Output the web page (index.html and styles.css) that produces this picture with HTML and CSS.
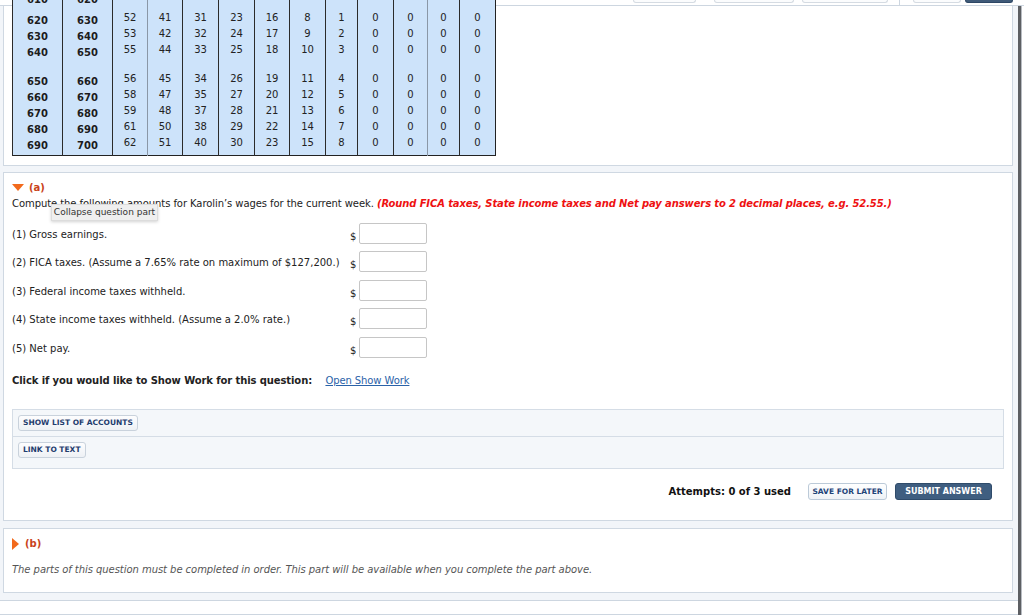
FILE: index.html
```html
<!DOCTYPE html>
<html>
<head>
<meta charset="utf-8">
<link rel="stylesheet" href="styles.css">
</head>
<body>
<div class="topbar">
  <span class="tb-btn w63"></span>
  <span class="tb-btn w80"></span>
  <span class="tb-btn w86"></span>
  <span class="tb-sep"></span>
  <span class="tb-btn w48"></span>
  <span class="tb-btn tb-dark w48"></span>
</div>
<div class="frame">
  <div class="content">
    <div class="panel panel-table">
      <table class="wage-table">
        <colgroup>
          <col style="width:50px"><col style="width:50px"><col style="width:35px"><col style="width:35px"><col style="width:36px"><col style="width:36px"><col style="width:35px"><col style="width:36px"><col style="width:32px"><col style="width:36px"><col style="width:34px"><col style="width:32px"><col style="width:36px">
        </colgroup>
        <tr class="r-first"><td class="b">610</td><td class="b">620</td><td></td><td class="g"></td><td></td><td></td><td></td><td></td><td></td><td></td><td></td><td class="g"></td><td></td></tr>
        <tr><td class="b">620</td><td class="b">630</td><td>52</td><td class="g">41</td><td>31</td><td>23</td><td>16</td><td>8</td><td>1</td><td>0</td><td>0</td><td class="g">0</td><td>0</td></tr>
        <tr><td class="b">630</td><td class="b">640</td><td>53</td><td class="g">42</td><td>32</td><td>24</td><td>17</td><td>9</td><td>2</td><td>0</td><td>0</td><td class="g">0</td><td>0</td></tr>
        <tr><td class="b">640</td><td class="b">650</td><td>55</td><td class="g">44</td><td>33</td><td>25</td><td>18</td><td>10</td><td>3</td><td>0</td><td>0</td><td class="g">0</td><td>0</td></tr>
        <tr class="r-blank"><td></td><td></td><td></td><td class="g"></td><td></td><td></td><td></td><td></td><td></td><td></td><td></td><td class="g"></td><td></td></tr>
        <tr><td class="b">650</td><td class="b">660</td><td>56</td><td class="g">45</td><td>34</td><td>26</td><td>19</td><td>11</td><td>4</td><td>0</td><td>0</td><td class="g">0</td><td>0</td></tr>
        <tr><td class="b">660</td><td class="b">670</td><td>58</td><td class="g">47</td><td>35</td><td>27</td><td>20</td><td>12</td><td>5</td><td>0</td><td>0</td><td class="g">0</td><td>0</td></tr>
        <tr><td class="b">670</td><td class="b">680</td><td>59</td><td class="g">48</td><td>37</td><td>28</td><td>21</td><td>13</td><td>6</td><td>0</td><td>0</td><td class="g">0</td><td>0</td></tr>
        <tr><td class="b">680</td><td class="b">690</td><td>61</td><td class="g">50</td><td>38</td><td>29</td><td>22</td><td>14</td><td>7</td><td>0</td><td>0</td><td class="g">0</td><td>0</td></tr>
        <tr class="r-last"><td class="b">690</td><td class="b">700</td><td>62</td><td class="g">51</td><td>40</td><td>30</td><td>23</td><td>15</td><td>8</td><td>0</td><td>0</td><td class="g">0</td><td>0</td></tr>
      </table>
    </div>

    <div class="panel part part-a">
      <div class="part-head">
        <svg class="tri-down" width="12" height="7" viewBox="0 0 12 7"><polygon points="0,0 12,0 6,7" fill="#f26a1c"/></svg>
        <span>(a)</span>
      </div>
      <div class="intro">Compute the following amounts for Karolin’s wages for the current week. <span class="note">(Round FICA taxes, State income taxes and Net pay answers to 2 decimal places, e.g. 52.55.)</span></div>
      <div class="tooltip">Collapse question part</div>

      <div class="answers">
        <div class="ans-row"><div class="ans-label">(1) Gross earnings.</div><div class="dollar">$</div><div class="ans-input"></div></div>
        <div class="ans-row"><div class="ans-label">(2) FICA taxes. (Assume a 7.65% rate on maximum of $127,200.)</div><div class="dollar">$</div><div class="ans-input"></div></div>
        <div class="ans-row"><div class="ans-label">(3) Federal income taxes withheld.</div><div class="dollar">$</div><div class="ans-input"></div></div>
        <div class="ans-row"><div class="ans-label">(4) State income taxes withheld. (Assume a 2.0% rate.)</div><div class="dollar">$</div><div class="ans-input"></div></div>
        <div class="ans-row"><div class="ans-label">(5) Net pay.</div><div class="dollar">$</div><div class="ans-input"></div></div>
      </div>

      <div class="showwork">Click if you would like to Show Work for this question: <a class="sw-link" href="#">Open Show Work</a></div>

      <div class="tools">
        <div class="tools-row"><span class="btn-light">SHOW LIST OF ACCOUNTS</span></div>
        <div class="tools-row tools-row2"><span class="btn-light">LINK TO TEXT</span></div>
      </div>

      <div class="submit-row">
        <span class="attempts">Attempts: 0 of 3 used</span>
        <span class="btn-save">SAVE FOR LATER</span>
        <span class="btn-submit">SUBMIT ANSWER</span>
      </div>
    </div>

    <div class="panel part part-b">
      <div class="part-head">
        <svg class="tri-right" width="7" height="12" viewBox="0 0 7 12"><polygon points="0,0 7,6 0,12" fill="#f26a1c"/></svg>
        <span>(b)</span>
      </div>
      <div class="locked">The parts of this question must be completed in order. This part will be available when you complete the part above.</div>
    </div>
  </div>
  <div class="footer-strip"></div>
</div>
</body>
</html>
```

FILE: styles.css
```css
html, body {
  margin: 0;
  padding: 0;
  background: #ffffff;
}
body {
  font-family: "DejaVu Sans", Verdana, sans-serif;
  font-size: 10px;
  color: #222;
  overflow: hidden;
}

/* top bar with partially visible buttons */
.topbar {
  height: 5px;
  border-bottom: 1px solid #cdd6e0;
  display: flex;
  justify-content: flex-end;
  align-items: flex-start;
  padding-right: 11px;
  background: #fff;
}
.tb-btn {
  height: 2px;
  border: 1px solid #d5dbe2;
  border-top: none;
  border-radius: 0 0 4px 4px;
  background: #fbfcfd;
}
.tb-dark {
  background: #3f5a78;
  border-color: #2e4765;
}
.w63 { width: 61px; }
.w80 { width: 78px; margin-left: 18px; }
.w86 { width: 84px; margin-left: 8px; }
.w48 { width: 46px; margin-left: 4px; }
.tb-sep {
  width: 1px;
  height: 5px;
  background: #cdd6e0;
  margin: 0 9px 0 11px;
}

.frame {
  width: 1018px;
  border-right: 3px solid #5d5f63;
  box-shadow: 1px 0 0 #b8bcc2;
}
.content {
  padding: 0 5px 7px 3px;
  background: #f2f5f9;
  border-bottom: 1px solid #cdd6e0;
}
.footer-strip {
  height: 13px;
  background: #fff;
  border-bottom: 1px solid #cdd6e0;
}

.panel {
  background: #fff;
  border: 1px solid #cfd8e2;
}

/* table panel */
.panel-table {
  border-top: none;
  display: flow-root;
  padding: 0 8px 9px 8px;
}
.wage-table {
  border-collapse: collapse;
  table-layout: fixed;
  width: 484px;
  margin-top: -16px;
  background: #cde3fa;
  border-left: 1px solid #222;
  border-right: 1px solid #222;
  border-bottom: 1px solid #222;
}
.wage-table tr { height: 16px; }
.wage-table tr.r-first { height: 21px; }
.wage-table tr.r-blank { height: 13px; }
.wage-table tr.r-last { height: 19px; }
.wage-table td {
  border-left: 1px solid #2b2b2b;
  text-align: center;
  vertical-align: top;
  padding: 1px 0 0 0;
  line-height: 12px;
  font-size: 10px;
  color: #222;
}
.wage-table tr.r-blank td { padding: 0; line-height: 0; }
.wage-table td.b {
  font-weight: bold;
  padding-top: 4px;
  color: #1c1c1c;
}
.wage-table tr.r-first td.b { padding-top: 4px; }
.wage-table td.g { border-left-color: #8a97a6; }

/* part panels */
.part {
  padding: 8px 8px 20px 8px;
}
.part-a {
  margin-top: 6px;
  position: relative;
}
.part-head {
  display: flex;
  align-items: center;
  height: 14px;
  line-height: 14px;
  font-weight: bold;
  color: #c9431a;
}
.tri-down { margin-right: 5px; }
.tri-right { margin-right: 6px; }

.intro {
  margin-top: 1px;
  line-height: 16px;
  white-space: nowrap;
  letter-spacing: -0.07px;
}
.note {
  color: #ee1111;
  font-weight: bold;
  font-style: italic;
  letter-spacing: -0.12px;
}

.tooltip {
  position: absolute;
  left: 47px;
  top: 31px;
  width: 107px;
  height: 17px;
  box-sizing: border-box;
  background: #efefef;
  border: 1px solid #dcdcdc;
  box-shadow: 0 1px 3px rgba(0,0,0,0.18);
  font-size: 9px;
  line-height: 15px;
  text-align: center;
  color: #333;
  white-space: nowrap;
}

.answers {
  margin-top: 11px;
  display: flex;
  flex-direction: column;
  gap: 7.5px;
}
.ans-row {
  display: flex;
  height: 21px;
}
.ans-label {
  width: 338px;
  white-space: nowrap;
  line-height: 14px;
  padding-top: 5px;
}
.dollar {
  width: 9px;
  align-self: flex-end;
  line-height: 12px;
  padding-bottom: 1px;
}
.ans-input {
  width: 68px;
  height: 21px;
  box-sizing: border-box;
  border: 1px solid #c6c6c6;
  border-radius: 2px;
  background: #fff;
}

.showwork {
  margin-top: 15px;
  line-height: 16px;
  font-weight: bold;
  white-space: nowrap;
  letter-spacing: -0.1px;
}
.sw-link {
  font-weight: normal;
  color: #2a62a8;
  text-decoration: underline;
  margin-left: 10px;
}

.tools {
  margin-top: 20px;
  border: 1px solid #d5dde6;
  background: #f4f7fa;
}
.tools-row {
  display: flex;
  padding: 5px;
}
.tools-row2 {
  border-top: 1px solid #d5dde6;
  padding-bottom: 10px;
}
.btn-light {
  display: inline-flex;
  align-items: center;
  height: 16px;
  box-sizing: border-box;
  padding: 0 4px;
  border: 1px solid #c9d2dc;
  border-radius: 3px;
  background: linear-gradient(#fdfdfe, #eef1f5);
  color: #1f3d6e;
  font-weight: bold;
  font-size: 7.5px;
  white-space: nowrap;
}

.submit-row {
  margin-top: 14px;
  display: flex;
  justify-content: flex-end;
  align-items: center;
  padding-right: 12px;
}
.attempts {
  font-weight: bold;
  font-size: 10px;
  color: #111;
  margin-right: 17px;
  white-space: nowrap;
}
.btn-save {
  display: inline-flex;
  align-items: center;
  justify-content: center;
  width: 79px;
  height: 17px;
  box-sizing: border-box;
  border: 1px solid #bccad8;
  border-radius: 3px;
  background: linear-gradient(#ffffff, #eef2f6);
  color: #1e4478;
  font-weight: bold;
  font-size: 7.5px;
  margin-right: 8px;
  white-space: nowrap;
}
.btn-submit {
  display: inline-flex;
  align-items: center;
  justify-content: center;
  width: 97px;
  height: 17px;
  box-sizing: border-box;
  border: 1px solid #2f4b6a;
  border-radius: 3px;
  background: #3f5e80;
  color: #fff;
  font-weight: bold;
  font-size: 8px;
  white-space: nowrap;
}

.part-b {
  margin-top: 7px;
  padding: 8px 8px 14px 8px;
}
.locked {
  margin-top: 11px;
  line-height: 16px;
  font-style: italic;
  color: #555;
  white-space: nowrap;
  letter-spacing: -0.05px;
}
```
